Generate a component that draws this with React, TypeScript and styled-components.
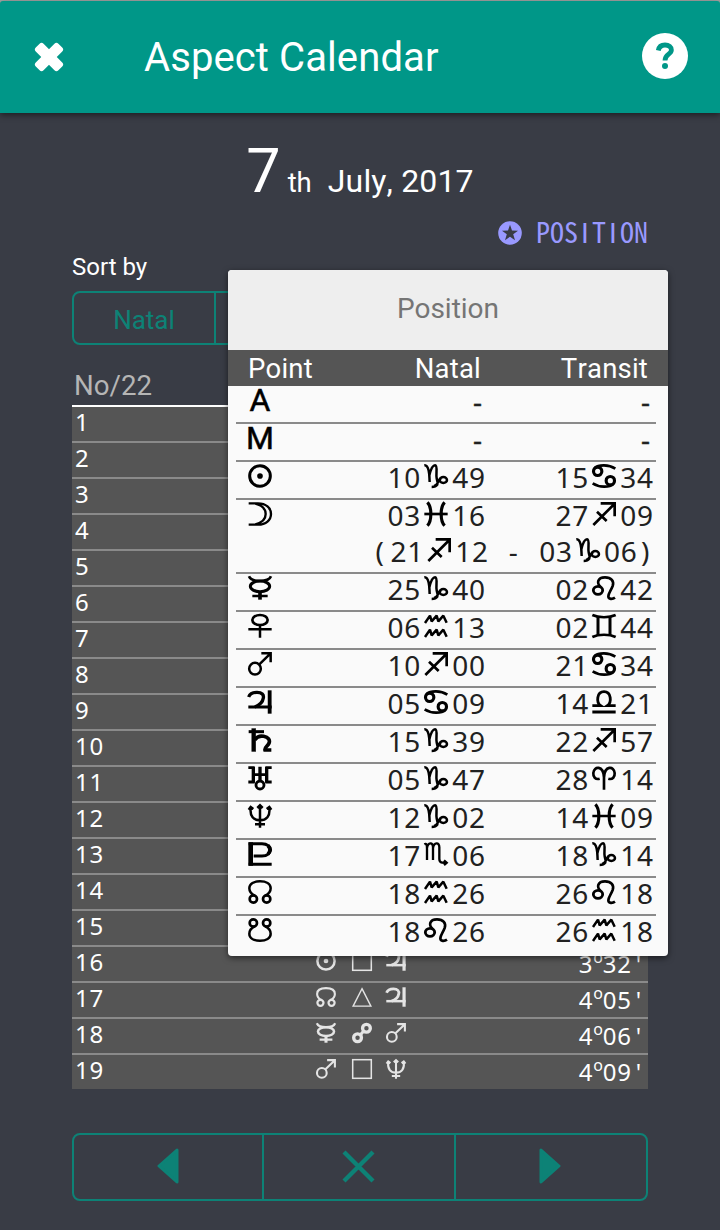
import React from 'react';
import styled, { createGlobalStyle } from 'styled-components';

const GlobalStyle = createGlobalStyle`
  * { box-sizing: border-box; }
  body { margin: 0; background: #393c45; font-family: Roboto, sans-serif; }
`;

const TEAL = '#0d8276';

/* ---------- symbols, all drawn on a 72 unit grid ---------- */

const glyphs: Record<string, React.ReactNode> = {
  sun: (<><circle cx="36" cy="36" r="31" strokeWidth="9" /><circle cx="36" cy="36" r="8.5" fill="currentColor" stroke="none" /></>),
  moon: (<path strokeWidth="7" d="M2 4H30C54 4 69 18 69 36S54 68 30 68H2M22 5C42 10 53 21 53 36S42 62 22 67" />),
  mercury: (<><ellipse cx="36" cy="31" rx="29" ry="16" strokeWidth="9" /><path strokeWidth="8" d="M3 1C7 11 20 15 36 15S65 11 69 1M13 60H59" /><path strokeWidth="11" d="M36 46V71" /></>),
  venus: (<><ellipse cx="36" cy="18" rx="23" ry="15" strokeWidth="8" /><path strokeWidth="7.5" d="M36 34V71M1 46H71" /></>),
  mars: (<><circle cx="21" cy="50" r="17.5" strokeWidth="7.5" /><path strokeWidth="7.5" d="M34 37L67 5M40 4H68V31" /></>),
  jupiter: (<><path strokeWidth="10" d="M2 21C6 10 16 7 27 7C42 7 48 15 46 24C44 37 34 46 20 51" /><path strokeWidth="9" d="M1 51H71" /><path strokeWidth="11.5" d="M65 1V71" /></>),
  saturn: (<><path strokeWidth="13" d="M17 1V71" /><path strokeWidth="9" d="M2 11H48" /><path strokeWidth="11" d="M20 36C27 25 38 23 47 25C61 28 67 36 63 46C59 55 49 58 51 66H70" /></>),
  uranus: (<><path strokeWidth="8.5" d="M1 5H20M52 5H71M1 48H20M52 48H71M15 26H57" /><path strokeWidth="10" d="M16 3V50M56 3V50M36 2V44" /><circle cx="36" cy="57" r="12" strokeWidth="8.5" /></>),
  neptune: (<path strokeWidth="7.5" d="M36 4V71M8 11C5 37 17 49 36 49S67 37 64 11M21 61H51M2 17L8 9L16 15M56 15L64 9L70 17M28 12L36 4L44 12" />),
  pluto: (<><path strokeWidth="14" d="M8 1V71" /><path strokeWidth="9" d="M2 67H71M2 5H42C75 5 75 42 42 42H17" /><path strokeWidth="11" d="M60 11C68 19 68 28 60 36" /></>),
  north: (<><circle cx="16" cy="57" r="11" strokeWidth="8" /><circle cx="56" cy="57" r="11" strokeWidth="8" /><path strokeWidth="7.5" d="M20 47C8 41 4 34 4 25C4 11 18 4 36 4S68 11 68 25C68 34 64 41 52 47" /></>),
  south: (<><circle cx="16" cy="15" r="11" strokeWidth="8" /><circle cx="56" cy="15" r="11" strokeWidth="8" /><path strokeWidth="7.5" d="M20 25C8 31 4 38 4 47C4 61 18 68 36 68S68 61 68 47C68 38 64 31 52 25" /></>),
  cap: (<><path strokeWidth="7.5" d="M1 4C10 3 12 12 14 20C17 32 16 42 17 54M16 34C20 18 25 4 33 4C42 5 35 28 38 43C40 53 43 58 40 62C36 68 30 69 23 69M30 66C42 64 42 49 51 42" /><ellipse cx="58" cy="48" rx="11" ry="9" strokeWidth="7.5" /></>),
  cancer: (<><circle cx="17" cy="22" r="12.5" strokeWidth="9.5" /><circle cx="55" cy="50" r="12.5" strokeWidth="9.5" /><path strokeWidth="8" d="M7 13C20 1 50 1 70 14M65 59C52 71 22 71 2 58" /></>),
  pisces: (<><path strokeWidth="9.5" d="M10 1C24 14 24 58 10 71M62 1C48 14 48 58 62 71" /><path strokeWidth="8" d="M1 36H71" /></>),
  sag: (<path strokeWidth="8" d="M4 69L67 6M26 4H68V43M15 29L44 57" />),
  aqua: (<path strokeWidth="7.5" strokeLinejoin="bevel" d="M3 27L18 5L23 22L38 5L43 22L58 5L68 26M3 69L18 47L23 64L38 47L43 64L58 47L68 68" />),
  leo: (<><ellipse cx="18" cy="43" rx="14" ry="12" strokeWidth="8.5" /><path strokeWidth="8" d="M27 34C12 21 17 4 39 4C58 4 67 16 62 30C57 43 49 52 49 61C49 71 62 70 69 65" /></>),
  gemini: (<><path strokeWidth="8" d="M1 3C20 12 52 12 71 3M1 69C20 60 52 60 71 69" /><path strokeWidth="9" d="M18 8V64M54 8V64" /></>),
  libra: (<path strokeWidth="8.5" d="M1 66H71M1 47H26C12 37 14 5 36 5S60 37 46 47H71" />),
  aries: (<path strokeWidth="8" d="M23 38C10 42 3 32 4 21C6 -1 34 -2 36 34V71M49 38C62 42 69 32 68 21C66 -1 38 -2 36 34" />),
  scorpio: (<path strokeWidth="7" d="M1 7C8 3 9 10 9 20V54M9 18C12 1 27 -1 27 16V54M27 18C30 1 46 -1 46 16V50C46 63 54 63 67 62M60 55L68 62L60 69" />),
  square: (<rect x="2.5" y="2.5" width="67" height="67" strokeWidth="5.5" />),
  trine: (<path strokeWidth="5" d="M36 6L68 69H4Z" />),
  opposition: (<><circle cx="20" cy="53" r="14" strokeWidth="12" /><circle cx="52" cy="19" r="14" strokeWidth="12" /><path strokeWidth="11" d="M30 43L42 29" /></>),
};

const SymbolSvg = styled.svg<{ $size: number }>`
  display: block;
  flex: none;
  width: ${p => p.$size}px;
  height: ${p => p.$size}px;
  overflow: visible;
  fill: none;
  stroke: currentColor;
`;

const Glyph = ({ name, size = 24 }: { name: string; size?: number }) => (
  <SymbolSvg $size={size} viewBox="0 0 72 72">{glyphs[name]}</SymbolSvg>
);

/* ---------- page ---------- */

const Page = styled.div`
  position: relative;
  width: 720px;
  height: 1230px;
  overflow: hidden;
  background: #393c45;
  color: #fff;
`;

const StatusEdge = styled.div`
  height: 5px;
  margin-bottom: -4px;
  background: #a5a5a5;
`;

const AppBar = styled.header`
  position: relative;
  display: flex;
  align-items: center;
  height: 112px;
  padding: 0 32px 0 34px;
  border-radius: 3px 3px 0 0;
  background: #009788;
  box-shadow: 0 2px 6px rgba(0, 0, 0, 0.5);
`;

const AppTitle = styled.h1`
  flex: 1;
  margin: 0 0 0 80px;
  padding-top: 2px;
  font-size: 40px;
  font-weight: 400;
  line-height: 48px;
  letter-spacing: 0.1px;
`;

const HelpBadge = styled.span`
  display: flex;
  align-items: center;
  justify-content: center;
  width: 46px;
  height: 46px;
  margin-bottom: 3px;
  border-radius: 50%;
  background: #fff;
  color: #009788;
`;

const Content = styled.main`
  display: flex;
  flex-direction: column;
  padding: 0 72px;
`;

const DateLine = styled.div`
  display: flex;
  justify-content: center;
  align-items: baseline;
  height: 100px;
  padding-top: 23px;
  line-height: 70px;
  font-kerning: none;
`;

const DateDay = styled.span`
  font-size: 61px;
`;

const DateSuffix = styled.span`
  margin: 0 16px 0 7px;
  font-size: 27.5px;
`;

const DateRest = styled.span`
  font-size: 32px;
  letter-spacing: 0.15px;
`;

const PositionLink = styled.div`
  display: flex;
  justify-content: flex-end;
  align-items: center;
  gap: 14px;
  height: 39px;
  color: #9999ff;
  font-family: 'Noto Sans CJK JP', sans-serif;
  font-size: 28px;
  line-height: 38px;
  font-feature-settings: 'hwid';
`;

const PositionLabel = styled.span`
  height: 38px;
  margin-top: -4px;
`;

const PlainLetter = styled.span`
  display: inline-block;
  width: 14px;
  font-family: Roboto, sans-serif;
  font-size: 28.5px;
  line-height: 30px;
  text-align: center;
`;

const SortLabel = styled.div`
  height: 39px;
  font-size: 24px;
  line-height: 30px;
`;

const Segments = styled.div<{ $height: number }>`
  display: flex;
  height: ${p => p.$height}px;
  border: 2px solid ${TEAL};
  border-radius: 8px;
  color: ${TEAL};
`;

const Segment = styled.div<{ $width?: number; $shift?: number }>`
  display: flex;
  align-items: center;
  justify-content: center;
  flex: ${p => (p.$width ? `0 0 ${p.$width}px` : 1)};
  padding: 0 ${p => p.$shift ?? 0}px 2px 0;
  font-size: 26px;
  & + & { border-left: 2px solid ${TEAL}; }
`;

const SegmentText = styled.span`
  padding-top: 6px;
`;

const ListHead = styled.div`
  height: 62px;
  padding: 24px 0 0 2px;
  border-bottom: 2px solid #fff;
  color: #b5b5b5;
  font-size: 27.7px;
  line-height: 33px;
`;

const List = styled.div`
  margin-bottom: 44px;
  background: #555;
`;

const ListRow = styled.div`
  display: grid;
  grid-template-columns: 241px 1fr 120px;
  height: 36px;
  padding: 0 2px 0 3px;
  border-bottom: 2px solid #8a8a8a;
  font-family: 'Noto Sans', sans-serif;
  font-size: 24px;
  letter-spacing: 0.67px;
  &:last-child { height: 34px; border-bottom: 0; }
`;

const RowNumber = styled.span`
  line-height: 29px;
`;

const AspectCell = styled.span`
  display: flex;
  padding-top: 4px;
  color: #e4e4e4;
  svg + svg { margin-left: 16px; }
  svg:last-child { margin-left: 14px; }
`;

const OrbCell = styled.span`
  display: flex;
  justify-content: flex-end;
  line-height: 33px;
`;

const Degree = styled.span`
  font-size: 16px;
  line-height: 20px;
  letter-spacing: 0;
`;

const Minute = styled.span`
  width: 14.4px;
  text-align: center;
`;

/* ---------- popup ---------- */

const Popup = styled.section`
  position: absolute;
  left: 228px;
  top: 270px;
  width: 440px;
  height: 686px;
  overflow: hidden;
  border-radius: 4px;
  background: #fafafa;
  color: #212121;
`;

const PopupShadow = styled.div`
  position: absolute;
  left: 228px;
  top: 270px;
  width: 440px;
  height: 686px;
  border-radius: 4px;
  box-shadow: 0 2px 6px rgba(0, 0, 0, 0.55);
`;

const PopupTitle = styled.h2`
  height: 80px;
  margin: 0;
  background: #eee;
  color: #757575;
  font-size: 28px;
  font-weight: 400;
  line-height: 77px;
  text-align: center;
`;

const PopupHead = styled.div`
  display: grid;
  grid-template-columns: 1fr 100px 167px;
  height: 36px;
  padding: 2px 20px 0;
  background: #555;
  color: #fff;
  font-size: 27.5px;
  line-height: 34px;
  letter-spacing: 0.2px;
  font-kerning: none;
  span + span { text-align: right; }
`;

const PointRow = styled.div`
  margin: 0 12px 0 8px;
  border-bottom: 2px solid #8a8a8a;
  &:last-child { border-bottom: 0; }
`;

const PointLine = styled.div`
  display: grid;
  grid-template-columns: 1fr 168px 168px;
  height: 36px;
  padding: 0 3px 0 12px;
`;

const RangeLine = styled.div`
  display: flex;
  justify-content: flex-end;
  height: 36px;
  padding-right: 2.4px;
`;

const PointIcon = styled.span`
  padding-top: 2px;
  color: #000;
`;

const PointLetter = styled.span`
  display: flex;
  justify-content: center;
  width: 24px;
  color: #000;
  font-size: 32px;
  line-height: 29px;
  -webkit-text-stroke: 0.5px #000;
`;

const Value = styled.span`
  display: flex;
  justify-content: flex-end;
  font-family: 'Noto Sans', sans-serif;
  font-size: 28px;
  line-height: 30px;
  letter-spacing: 0.78px;
  svg { margin: 2px 3.6px 0; color: #000; }
`;

const Digits = styled.span`
  width: 33.6px;
  text-align: center;
  padding-left: 0.78px;
  white-space: nowrap;
`;

const Cell = styled.span<{ $chars?: number; $inset?: number }>`
  width: ${p => (p.$chars ?? 1) * 16.8}px;
  padding-right: ${p => p.$inset ?? 0}px;
  text-align: center;
  letter-spacing: 0;
`;

const Dash = styled(Cell)`
  padding-left: 2px;
  -webkit-text-stroke: 0.4px #212121;
`;

const Pos = ({ v }: { v: string }) => {
  if (v === '-') return <Value><Dash>-</Dash></Value>;
  const [deg, sign, min] = v.split(' ');
  return <Value><Digits>{deg}</Digits><Glyph name={sign} /><Digits>{min}</Digits></Value>;
};

interface Point { icon?: string; letter?: string; natal: string; transit: string; range?: [string, string]; }

const points: Point[] = [
  { letter: 'A', natal: '-', transit: '-' },
  { letter: 'M', natal: '-', transit: '-' },
  { icon: 'sun', natal: '10 cap 49', transit: '15 cancer 34' },
  { icon: 'moon', natal: '03 pisces 16', transit: '27 sag 09', range: ['21 sag 12', '03 cap 06'] },
  { icon: 'mercury', natal: '25 cap 40', transit: '02 leo 42' },
  { icon: 'venus', natal: '06 aqua 13', transit: '02 gemini 44' },
  { icon: 'mars', natal: '10 sag 00', transit: '21 cancer 34' },
  { icon: 'jupiter', natal: '05 cancer 09', transit: '14 libra 21' },
  { icon: 'saturn', natal: '15 cap 39', transit: '22 sag 57' },
  { icon: 'uranus', natal: '05 cap 47', transit: '28 aries 14' },
  { icon: 'neptune', natal: '12 cap 02', transit: '14 pisces 09' },
  { icon: 'pluto', natal: '17 scorpio 06', transit: '18 cap 14' },
  { icon: 'north', natal: '18 aqua 26', transit: '26 leo 18' },
  { icon: 'south', natal: '18 leo 26', transit: '26 aqua 18' },
];

interface Aspect { symbols: [string, string, string]; deg: string; min: string; }

const aspects: Record<number, Aspect> = {
  16: { symbols: ['sun', 'square', 'jupiter'], deg: '3', min: '32' },
  17: { symbols: ['north', 'trine', 'jupiter'], deg: '4', min: '05' },
  18: { symbols: ['mercury', 'opposition', 'mars'], deg: '4', min: '06' },
  19: { symbols: ['mars', 'square', 'neptune'], deg: '4', min: '09' },
};

const rows = Array.from({ length: 19 }, (_, i) => i + 1);

export default function App() {
  return (
    <Page>
      <GlobalStyle />
      <StatusEdge />
      <AppBar>
        <svg width="30" height="30" viewBox="0 0 30 30" fill="#fff">
          <rect x="-1" y="9.5" width="32" height="11" rx="2.8" transform="rotate(45 15 15)" />
          <rect x="-1" y="9.5" width="32" height="11" rx="2.8" transform="rotate(-45 15 15)" />
        </svg>
        <AppTitle>Aspect Calendar</AppTitle>
        <HelpBadge>
          <svg width="20" height="28" viewBox="0 0 20 28" fill="none" stroke="currentColor">
            <path d="M3.3 8.5C4 4.5 6.5 3 10 3C14 3 16.4 5 16.4 8C16.4 12.5 10 12 10 18.5" strokeWidth="4.8" />
            <circle cx="10" cy="24" r="3" fill="currentColor" stroke="none" />
          </svg>
        </HelpBadge>
      </AppBar>

      <Content>
        <DateLine>
          <DateDay>7</DateDay>
          <DateSuffix>th</DateSuffix>
          <DateRest>July, 2017</DateRest>
        </DateLine>

        <PositionLink>
          <svg width="24" height="24" viewBox="0 0 24 24">
            <circle cx="12" cy="12" r="11.8" fill="#9999ff" />
            <path d="M12 3.8L14 9.6L20 9.7L15.2 13.3L17 19.2L12 15.7L7 19.2L8.8 13.3L4 9.7L10 9.6Z" fill="#393c45" />
          </svg>
          <PositionLabel>
            POS<PlainLetter>I</PlainLetter>T<PlainLetter>I</PlainLetter>ON
          </PositionLabel>
        </PositionLink>

        <SortLabel>Sort by</SortLabel>
        <Segments $height={54}>
          <Segment $width={140}><SegmentText>Natal</SegmentText></Segment>
          <Segment />
        </Segments>

        <ListHead>No/22</ListHead>
        <List>
          {rows.map(n => {
            const a = aspects[n];
            return (
              <ListRow key={n}>
                <RowNumber>{n}</RowNumber>
                {a && (
                  <>
                    <AspectCell>
                      {a.symbols.map((s, i) => <Glyph key={i} name={s} size={20} />)}
                    </AspectCell>
                    <OrbCell>
                      {a.deg}<Degree>o</Degree>{a.min}<Minute>'</Minute>
                    </OrbCell>
                  </>
                )}
              </ListRow>
            );
          })}
        </List>

        <Segments $height={68}>
          <Segment $width={188}>
            <svg width="22" height="36" viewBox="0 0 22 36">
              <path d="M20 2V34L2 18Z" fill={TEAL} stroke={TEAL} strokeWidth="3" strokeLinejoin="round" />
            </svg>
          </Segment>
          <Segment $width={192} $shift={2}>
            <svg width="33" height="33" viewBox="0 0 33 33">
              <path d="M2 2L31 31M31 2L2 31" stroke={TEAL} strokeWidth="4.3" />
            </svg>
          </Segment>
          <Segment $shift={2}>
            <svg width="22" height="36" viewBox="0 0 22 36">
              <path d="M2 2V34L20 18Z" fill={TEAL} stroke={TEAL} strokeWidth="3" strokeLinejoin="round" />
            </svg>
          </Segment>
        </Segments>
      </Content>

      <PopupShadow />
      <Popup>
        <PopupTitle>Position</PopupTitle>
        <PopupHead><span>Point</span><span>Natal</span><span>Transit</span></PopupHead>
        {points.map((p, i) => (
          <PointRow key={i}>
            <PointLine>
              {p.icon
                ? <PointIcon><Glyph name={p.icon} /></PointIcon>
                : <PointLetter>{p.letter}</PointLetter>}
              <Pos v={p.natal} />
              <Pos v={p.transit} />
            </PointLine>
            {p.range && (
              <RangeLine>
                <Value><Cell $inset={3}>(</Cell></Value>
                <Pos v={p.range[0]} />
                <Value><Cell $chars={3}>-</Cell></Value>
                <Pos v={p.range[1]} />
                <Value><Cell>)</Cell></Value>
              </RangeLine>
            )}
          </PointRow>
        ))}
      </Popup>
    </Page>
  );
}
